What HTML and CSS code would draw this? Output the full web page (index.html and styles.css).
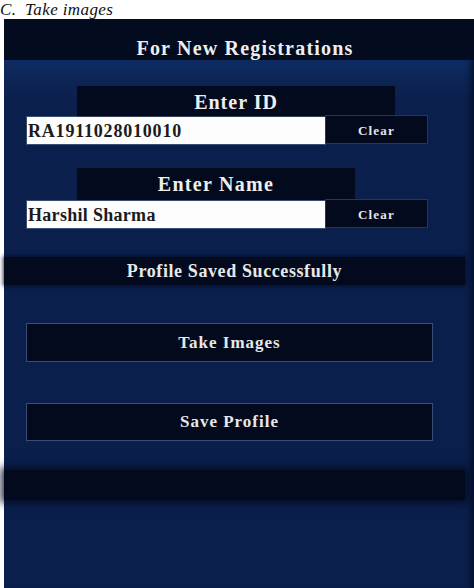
FILE: index.html
```html
<!DOCTYPE html>
<html>
<head>
<meta charset="utf-8">
<link rel="stylesheet" href="styles.css">
</head>
<body>
<div class="caption"><span class="cap-num">C.</span><span class="cap-text">Take images</span></div>
<div class="panel">
  <div class="header">For New Registrations</div>
  <div class="body">
    <div class="label label-id">Enter ID</div>
    <div class="row row-id">
      <div class="field">RA1911028010010</div>
      <div class="clear">Clear</div>
    </div>
    <div class="label label-name">Enter Name</div>
    <div class="row row-name">
      <div class="field field-name">Harshil Sharma</div>
      <div class="clear">Clear</div>
    </div>
    <div class="strip status">Profile Saved Successfully</div>
    <div class="action action-take">Take Images</div>
    <div class="action action-save">Save Profile</div>
    <div class="strip footer-strip"></div>
  </div>
</div>
</body>
</html>
```
FILE: styles.css
```css
html, body {
  margin: 0;
  padding: 0;
  background: #ffffff;
}
body {
  width: 474px;
  height: 588px;
  overflow: hidden;
  font-family: "Liberation Serif", "Times New Roman", serif;
}
.caption {
  height: 19px;
  line-height: 19px;
  font-size: 17px;
  letter-spacing: 0.4px;
  font-style: italic;
  color: #111;
  white-space: nowrap;
}
.cap-num {
  display: inline-block;
  margin-left: 0;
  width: 25px;
}
.panel {
  margin-left: 4px;
  width: 470px;
  height: 569px;
  display: flex;
  flex-direction: column;
  background: #0b1f4c;
}
.header {
  box-sizing: border-box;
  height: 41px;
  padding-top: 18px;
  padding-left: 12px;
  line-height: 23px;
  text-align: center;
  font-size: 20px;
  font-weight: bold;
  letter-spacing: 1.2px;
  color: #eeeeee;
  background: #030b1f;
}
.body {
  flex: 1;
  display: flex;
  flex-direction: column;
  background: linear-gradient(to bottom, #0f2c63 0, #0d2759 14px, #0b1f4c 40px, #0b1f4c 100%);
  box-shadow: inset -7px 0 5px -3px rgba(2, 8, 25, 0.55);
}
.label {
  box-sizing: border-box;
  margin-left: 73px;
  text-align: center;
  font-size: 20px;
  font-weight: bold;
  color: #eeeeee;
  background: #030a1d;
}
.label-id {
  margin-top: 26px;
  width: 318px;
  height: 31px;
  padding-top: 2px;
  line-height: 29px;
  letter-spacing: 1px;
}
.label-name {
  margin-top: 24px;
  width: 278px;
  height: 32px;
  padding-top: 1px;
  line-height: 31px;
  letter-spacing: 1.3px;
}
.row {
  display: flex;
  align-items: flex-end;
  margin-left: 23px;
  height: 29px;
}
.row-id {
  margin-top: -2px;
}
.row-name {
  margin-top: -1px;
}
.field {
  box-sizing: border-box;
  width: 298px;
  height: 27px;
  padding: 1px 0 0 1px;
  line-height: 26px;
  font-size: 18px;
  font-weight: bold;
  letter-spacing: 0.8px;
  color: #1b1b1b;
  background: #fdfdfd;
  box-shadow: 0 0 0 1px rgba(150, 165, 190, 0.35);
}
.field-name {
  letter-spacing: 0.3px;
}
.clear {
  box-sizing: border-box;
  width: 103px;
  height: 29px;
  display: flex;
  align-items: center;
  justify-content: center;
  padding-top: 3px;
  font-size: 13px;
  font-weight: bold;
  letter-spacing: 1.2px;
  color: #e6e6e6;
  background: #030a1d;
  border: 1px solid #26365a;
}
.strip {
  width: 461px;
  background: #030a1d;
  box-shadow: 0 0 4px 1px rgba(3, 10, 29, 0.8);
}
.status {
  margin-top: 29px;
  height: 28px;
  line-height: 28px;
  text-align: center;
  font-size: 18px;
  font-weight: bold;
  letter-spacing: 0.6px;
  color: #e8e8e8;
}
.action {
  box-sizing: border-box;
  margin-left: 22px;
  width: 407px;
  display: flex;
  align-items: center;
  justify-content: center;
  font-size: 17px;
  font-weight: bold;
  letter-spacing: 1px;
  color: #e8e8e8;
  background: #030a1d;
  border: 1px solid #3a4d70;
}
.action-take {
  margin-top: 38px;
  height: 39px;
}
.action-save {
  margin-top: 41px;
  height: 38px;
}
.footer-strip {
  margin-top: 29px;
  height: 30px;
  box-shadow: 0 0 8px 3px rgba(3, 10, 29, 0.85);
}
```
